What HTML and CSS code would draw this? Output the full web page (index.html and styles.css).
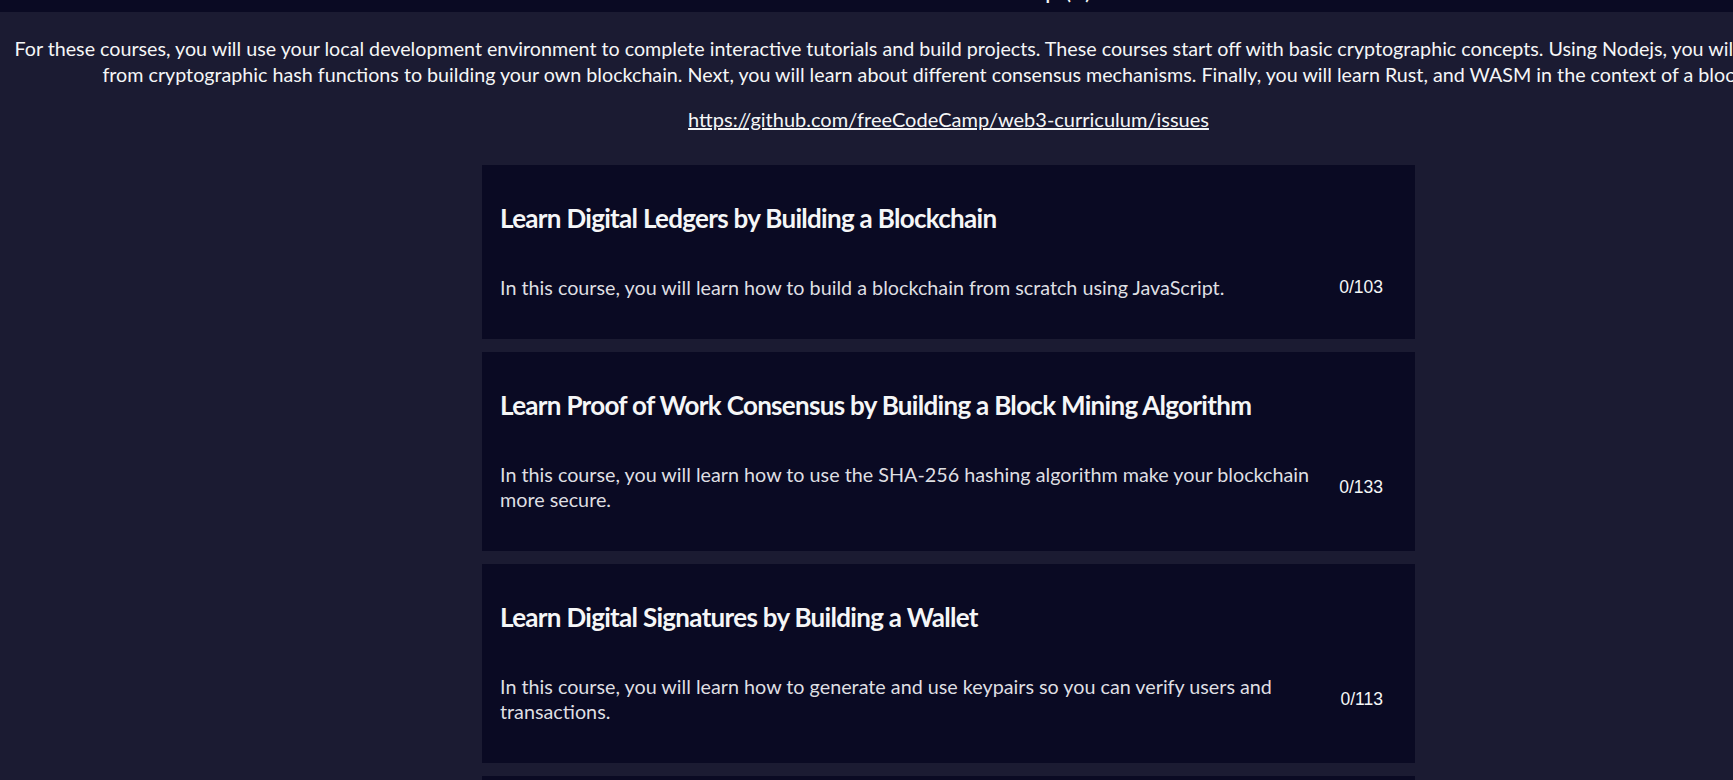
FILE: index.html
```html
<!DOCTYPE html>
<html lang="en">
<head>
<meta charset="utf-8">
<title>Web3 Curriculum</title>
<link rel="stylesheet" href="styles.css">
</head>
<body>
<div class="page">
  <header class="topbar">
    <h1 class="topbar-title">Web3 Curriculum Setup (1)</h1>
  </header>
  <main class="content">
    <p class="intro">For these courses, you will use your local development environment to complete interactive tutorials and build projects. These courses start off with basic cryptographic concepts. Using Nodejs, you will learn everything from cryptographic hash functions to building your own blockchain. Next, you will learn about different consensus mechanisms. Finally, you will learn Rust, and WASM in the context of a blockchain.</p>
    <p class="issues"><a class="issues-link" href="#">https://github.com/freeCodeCamp/web3-curriculum/issues</a></p>
    <ul class="courses">
      <li class="course">
        <h2 class="course-title">Learn Digital Ledgers by Building a Blockchain</h2>
        <div class="course-body">
          <p class="course-desc">In this course, you will learn how to build a blockchain from scratch using JavaScript.</p>
          <span class="course-count">0/103</span>
        </div>
      </li>
      <li class="course">
        <h2 class="course-title">Learn Proof of Work Consensus by Building a Block Mining Algorithm</h2>
        <div class="course-body">
          <p class="course-desc">In this course, you will learn how to use the SHA-256 hashing algorithm make your blockchain more secure.</p>
          <span class="course-count">0/133</span>
        </div>
      </li>
      <li class="course">
        <h2 class="course-title">Learn Digital Signatures by Building a Wallet</h2>
        <div class="course-body">
          <p class="course-desc">In this course, you will learn how to generate and use keypairs so you can verify users and transactions.</p>
          <span class="course-count">0/113</span>
        </div>
      </li>
      <li class="course">
        <h2 class="course-title">Learn Peer-to-Peer Networks by Building a Node Network</h2>
        <div class="course-body">
          <p class="course-desc">In this course, you will learn how to connect nodes so they can share the blockchain.</p>
          <span class="course-count">0/96</span>
        </div>
      </li>
    </ul>
  </main>
</div>
</body>
</html>
```
FILE: styles.css
```css
html {
  scrollbar-width: none;
  overflow: hidden;
}
html::-webkit-scrollbar {
  display: none;
}
body {
  margin: 0;
  background: #1b1b32;
  color: #f5f6f7;
  font-family: Lato, "Noto Sans", sans-serif;
  overflow: hidden;
}
.page {
  width: 1897px;
}
.topbar {
  height: 12px;
  background: #0a0a23;
  overflow: hidden;
  display: flex;
  justify-content: center;
}
.topbar-title {
  margin: -25px 0 0 0;
  font-size: 24px;
  line-height: 30px;
  font-weight: 400;
  color: #f5f6f7;
}
.content {
  display: flex;
  flex-direction: column;
  align-items: center;
  padding-top: 24px;
}
.intro {
  margin: 0;
  font-size: 19.7px;
  line-height: 26px;
  text-align: center;
}
.issues {
  margin: 19px 0 0 0;
  font-size: 20px;
  line-height: 24px;
}
.issues-link {
  color: #f5f6f7;
  text-decoration: underline;
}
.courses {
  list-style: none;
  margin: 34px 0 0 0;
  padding: 0;
  width: 933px;
  display: flex;
  flex-direction: column;
  gap: 13px;
}
.course {
  background: #0a0a23;
  padding: 38px 32px 38px 18px;
}
.course-title {
  margin: 0 0 41px 0;
  font-size: 26px;
  line-height: 31px;
  letter-spacing: -0.7px;
  font-weight: 700;
  color: #f5f6f7;
}
.course-body {
  display: flex;
  align-items: center;
  gap: 16px;
}
.course-desc {
  margin: 0;
  flex: 1;
  font-size: 19.75px;
  line-height: 25.5px;
  color: #dfdfe2;
}
.course-count {
  font-family: "Liberation Sans", Arial, sans-serif;
  font-size: 17.5px;
  color: #f5f6f7;
}
```
